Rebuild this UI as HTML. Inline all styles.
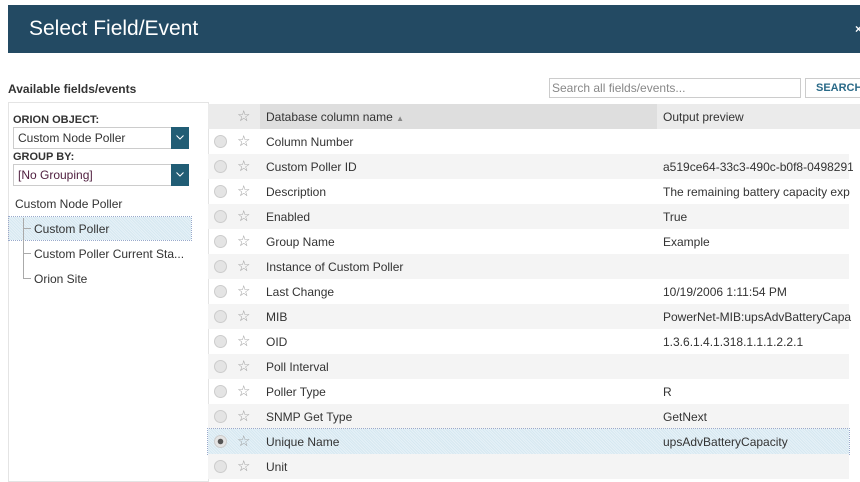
<!DOCTYPE html>
<html><head><style>
*{margin:0;padding:0;box-sizing:border-box}
body{width:860px;height:480px;overflow:hidden;background:#fff;font-family:"Liberation Sans",sans-serif;font-size:12px;color:#333;position:relative}
.a{position:absolute}
.hdr{left:8px;top:5px;width:852px;height:48px;background:#234a63}
.hdr span{position:absolute;left:21px;top:12px;color:#fff;font-size:21px}
.sel{background:#fff;border:1px solid #ccc;height:22px;width:176px;padding:3px 4px;font-size:12px}
.btn{position:absolute;right:-1px;top:-1px;width:18px;height:22px;background:#215d75}
.btn svg{position:absolute;left:5px;top:8px}
.row{position:absolute;left:208px;width:641px;height:25px}
.row .r{position:absolute;left:6px;top:6px;width:13px;height:13px;border-radius:50%;background:#e4e4e4;border:1px solid #ccc}
.row .s{position:absolute;left:29px;top:3px;color:#999;font-size:15px}
.row .n{position:absolute;left:58px;top:6px}
.row .o{position:absolute;left:455px;top:6px;white-space:nowrap;width:190px;overflow:hidden}
.g{background:#f4f4f4}
.hatch{background:repeating-linear-gradient(45deg,#e6f1f7 0 1px,#d6e8f1 1px 2px);outline:1px dotted #9ac}
</style></head><body>
<div class="a hdr"><span>Select Field/Event</span></div>
<div class="a" style="left:855px;top:22px;color:#fff;font-weight:bold">×</div>
<div class="a" style="left:8px;top:82px;font-weight:bold;font-size:12px">Available fields/events</div>
<div class="a" style="left:549px;top:78px;width:252px;height:20px;border:1px solid #ccc;color:#888;padding:2px 2px">Search all fields/events...</div>
<div class="a" style="left:805px;top:78px;width:60px;height:20px;border:1px solid #ccc;color:#2a6a88;font-weight:bold;padding:3px 10px;font-size:11px">SEARCH</div>
<div class="a" style="left:8px;top:102px;width:201px;height:380px;border:1px solid #e4e4e4"></div>
<div class="a" style="left:13px;top:114px;font-weight:bold;font-size:11px">ORION OBJECT:</div>
<div class="a sel" style="left:13px;top:127px">Custom Node Poller<div class="btn"><svg width="8" height="5"><path d="M0.5 0.5L4 4L7.5 0.5" stroke="#fff" fill="none"/></svg></div></div>
<div class="a" style="left:13px;top:151px;font-weight:bold;font-size:11px">GROUP BY:</div>
<div class="a sel" style="left:13px;top:164px;color:#502040">[No Grouping]<div class="btn"><svg width="8" height="5"><path d="M0.5 0.5L4 4L7.5 0.5" stroke="#fff" fill="none"/></svg></div></div>
<div class="a" style="left:15px;top:197px">Custom Node Poller</div>
<div class="a hatch" style="left:9px;top:217px;width:182px;height:23px"></div>
<div class="a" style="left:23px;top:218px;width:8px;height:11px;border-left:1px solid #aaa;border-bottom:1px solid #aaa"></div>
<div class="a" style="left:23px;top:229px;width:1px;height:40px;background:#aaa"></div>
<div class="a" style="left:23px;top:253px;width:8px;height:1px;background:#aaa"></div>
<div class="a" style="left:23px;top:269px;width:8px;height:10px;border-left:1px solid #aaa;border-bottom:1px solid #aaa"></div>
<div class="a" style="left:34px;top:222px">Custom Poller</div>
<div class="a" style="left:34px;top:247px">Custom Poller Current Sta...</div>
<div class="a" style="left:34px;top:272px">Orion Site</div>
<div class="a" style="left:208px;top:104px;width:652px;height:25px;background:#ebebeb"></div>
<div class="a" style="left:260px;top:104px;width:397px;height:25px;background:#dedede"></div>
<div class="a" style="left:237px;top:107px;color:#999;font-size:15px">☆</div>
<div class="a" style="left:266px;top:110px">Database column name <span style="font-size:8px;color:#888">▲</span></div>
<div class="a" style="left:663px;top:110px">Output preview</div>
<div class="row" style="top:129px"><div class="r"></div><div class="s">☆</div><div class="n">Column Number</div></div>
<div class="row g" style="top:154px"><div class="r"></div><div class="s">☆</div><div class="n">Custom Poller ID</div><div class="o">a519ce64-33c3-490c-b0f8-0498291</div></div>
<div class="row" style="top:179px"><div class="r"></div><div class="s">☆</div><div class="n">Description</div><div class="o">The remaining battery capacity exp</div></div>
<div class="row g" style="top:204px"><div class="r"></div><div class="s">☆</div><div class="n">Enabled</div><div class="o">True</div></div>
<div class="row" style="top:229px"><div class="r"></div><div class="s">☆</div><div class="n">Group Name</div><div class="o">Example</div></div>
<div class="row g" style="top:254px"><div class="r"></div><div class="s">☆</div><div class="n">Instance of Custom Poller</div></div>
<div class="row" style="top:279px"><div class="r"></div><div class="s">☆</div><div class="n">Last Change</div><div class="o">10/19/2006 1:11:54 PM</div></div>
<div class="row g" style="top:304px"><div class="r"></div><div class="s">☆</div><div class="n">MIB</div><div class="o">PowerNet-MIB:upsAdvBatteryCapa</div></div>
<div class="row" style="top:329px"><div class="r"></div><div class="s">☆</div><div class="n">OID</div><div class="o">1.3.6.1.4.1.318.1.1.1.2.2.1</div></div>
<div class="row g" style="top:354px"><div class="r"></div><div class="s">☆</div><div class="n">Poll Interval</div></div>
<div class="row" style="top:379px"><div class="r"></div><div class="s">☆</div><div class="n">Poller Type</div><div class="o">R</div></div>
<div class="row g" style="top:404px"><div class="r"></div><div class="s">☆</div><div class="n">SNMP Get Type</div><div class="o">GetNext</div></div>
<div class="row hatch" style="top:429px"><div class="r" style="background:radial-gradient(circle,#555 0 2.5px,#e4e4e4 3px)"></div><div class="s">☆</div><div class="n">Unique Name</div><div class="o">upsAdvBatteryCapacity</div></div>
<div class="row g" style="top:454px"><div class="r"></div><div class="s">☆</div><div class="n">Unit</div></div>
</body></html>
